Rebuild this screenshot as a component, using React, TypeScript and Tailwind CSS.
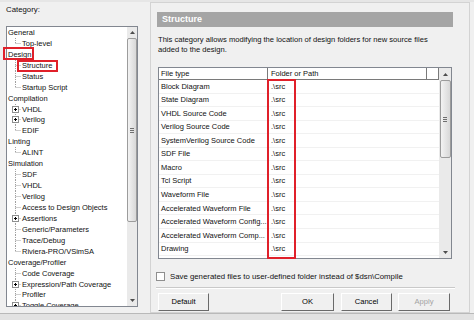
import React from "react";

type Node = { t: string; l: 0 | 1; last?: boolean; plus?: boolean };

const TREE: Node[] = [
  { t: "General", l: 0 },
  { t: "Top-level", l: 1, last: true },
  { t: "Design", l: 0 },
  { t: "Structure", l: 1 },
  { t: "Status", l: 1 },
  { t: "Startup Script", l: 1, last: true },
  { t: "Compilation", l: 0 },
  { t: "VHDL", l: 1, plus: true },
  { t: "Verilog", l: 1, plus: true },
  { t: "EDIF", l: 1, last: true },
  { t: "Linting", l: 0 },
  { t: "ALINT", l: 1, last: true },
  { t: "Simulation", l: 0 },
  { t: "SDF", l: 1 },
  { t: "VHDL", l: 1 },
  { t: "Verilog", l: 1 },
  { t: "Access to Design Objects", l: 1 },
  { t: "Assertions", l: 1, plus: true },
  { t: "Generic/Parameters", l: 1 },
  { t: "Trace/Debug", l: 1 },
  { t: "Riviera-PRO/VSimSA", l: 1, last: true },
  { t: "Coverage/Profiler", l: 0 },
  { t: "Code Coverage", l: 1 },
  { t: "Expression/Path Coverage", l: 1, plus: true },
  { t: "Profiler", l: 1 },
  { t: "Toggle Coverage", l: 1, plus: true },
];

const FILE_TYPES = [
  "Block Diagram",
  "State Diagram",
  "VHDL Source Code",
  "Verilog Source Code",
  "SystemVerilog Source Code",
  "SDF File",
  "Macro",
  "Tcl Script",
  "Waveform File",
  "Accelerated Waveform File",
  "Accelerated Waveform Config...",
  "Accelerated Waveform Comp...",
  "Drawing",
];

function Connector({ last, plus }: { last?: boolean; plus?: boolean }) {
  return (
    <svg width="15" height="11" viewBox="0 0 15 11" className="shrink-0">
      <line x1="8.5" y1="0" x2="8.5" y2={last ? 5.5 : 11} stroke="#a0a0a0" strokeDasharray="1 1" />
      <line x1="8.5" y1="5.5" x2="13.5" y2="5.5" stroke="#a0a0a0" strokeDasharray="1 1" />
      {plus && (
        <g>
          <rect x="5.5" y="2.5" width="6" height="6" fill="#fff" stroke="#8e8f8f" />
          <line x1="7" y1="5.5" x2="10" y2="5.5" stroke="#000" />
          <line x1="8.5" y1="4" x2="8.5" y2="7" stroke="#000" />
        </g>
      )}
    </svg>
  );
}

function Arrow({ up }: { up?: boolean }) {
  return (
    <svg width="5" height="3" viewBox="0 0 5 3">
      <path d={up ? "M0 3 L2.5 0 L5 3 Z" : "M0 0 L2.5 3 L5 0 Z"} fill="#4d4d4d" />
    </svg>
  );
}

function Grip() {
  return (
    <div className="flex flex-col gap-[1px]">
      <div className="w-[4px] h-px bg-[#6f6f6f]" />
      <div className="w-[4px] h-px bg-[#6f6f6f]" />
      <div className="w-[4px] h-px bg-[#6f6f6f]" />
    </div>
  );
}

function Btn({ label, w, disabled }: { label: string; w: string; disabled?: boolean }) {
  return (
    <div
      className={`${w} h-[18px] flex items-center justify-center bg-[#f0f0f0] border border-t-white border-l-white border-r-[#6a6a6a] border-b-[#6a6a6a] text-[7.6px] ${
        disabled ? "text-[#a3a3a3]" : "text-black"
      }`}
    >
      {label}
    </div>
  );
}

export default function App() {
  return (
    <div className="w-[474px] h-[320px] bg-[#f0f0f0] flex flex-col overflow-hidden font-['Liberation_Sans',Arial,sans-serif] text-[7.5px] text-[#111]">
      <div className="h-[313px] flex border-t-2 border-[#e6e6e6]">
        {/* Left: category tree */}
        <div className="relative w-[150px] shrink-0">
          <div className="pl-[6px] pt-[3px] leading-[10px] text-[7.8px]">Category:</div>
          <div className="ml-[6px] mt-[11px] w-[132px] h-[281px] border border-[#828790] bg-white flex">
            <div className="flex-1 overflow-hidden">
              {TREE.map((n, i) => (
                <div key={i} className="h-[10.95px] flex items-center whitespace-nowrap leading-[11px]">
                  {n.l === 1 ? <Connector last={n.last} plus={n.plus} /> : <div className="w-[1px]" />}
                  <span>{n.t}</span>
                </div>
              ))}
            </div>
            <div className="w-[10px] bg-[#eaeaea] flex flex-col items-center">
              <div className="h-[11px] flex items-center justify-center">
                <Arrow up />
              </div>
              <div className="w-[10px] h-[184px] border border-[#9c9c9c] rounded-[2px] bg-gradient-to-r from-[#f3f3f3] to-[#d8d8d8] flex items-center justify-center">
                <Grip />
              </div>
              <div className="flex-1" />
              <div className="h-[11px] flex items-center justify-center">
                <Arrow />
              </div>
            </div>
          </div>
          {/* annotation boxes */}
          <div className="absolute left-[3px] top-[45px] w-[31px] h-[13px] border-2 border-[#e0202a]" />
          <div className="absolute left-[17px] top-[58px] w-[41px] h-[12px] border-2 border-[#e0202a]" />
        </div>

        {/* Right: settings panel */}
        <div className="w-[320px] h-[311px] border border-[#d3d3d3] flex flex-col">
          <div className="ml-[6px] mt-[9px] w-[296px] h-[15px] bg-[#a5a5a5] text-white font-bold text-[9px] leading-[15px] pl-[5px]">
            Structure
          </div>
          <div className="ml-[7px] mt-[8px] leading-[10px] whitespace-nowrap text-[7.6px]">
            This category allows modifying the location of design folders for new source files
            <br />
            added to the design.
          </div>
          <div className="relative ml-[7px] mt-[12px] w-[294px] h-[192px] border border-[#828790] bg-white flex">
            <div className="w-[280px] flex flex-col">
              <div className="h-[12px] flex border-b border-[#7a7a7a] leading-[12px]">
                <div className="w-[109px] pl-[2px] border-r border-[#7a7a7a]">File type</div>
                <div className="w-[159px] pl-[3px] border-r border-[#7a7a7a]">Folder or Path</div>
                <div className="flex-1 border-r border-[#7a7a7a]" />
              </div>
              {FILE_TYPES.map((f) => (
                <div key={f} className="h-[13.56px] flex items-center border-b border-[#f1f1f1] whitespace-nowrap">
                  <div className="w-[109px] pl-[2px] overflow-hidden">{f}</div>
                  <div className="pl-[3px]">.\src</div>
                </div>
              ))}
            </div>
            <div className="w-[12px] bg-[#eaeaea] flex flex-col items-center">
              <div className="h-[12px] flex items-center justify-center">
                <Arrow up />
              </div>
              <div className="w-[11px] h-[78px] border border-[#9c9c9c] rounded-[2px] bg-gradient-to-r from-[#f3f3f3] to-[#d8d8d8] flex items-center justify-center">
                <Grip />
              </div>
              <div className="flex-1" />
              <div className="h-[12px] flex items-center justify-center">
                <Arrow />
              </div>
            </div>
            <div className="absolute left-[108px] top-[11px] w-[29px] h-[180px] border-2 border-[#e0202a]" />
          </div>
          <div className="ml-[5px] mt-[13px] h-[9px] flex items-center">
            <div className="w-[9px] h-[9px] border border-[#8f8f8f] bg-white" />
            <span className="ml-[5px] text-[7.8px]">Save generated files to user-defined folder instead of $dsn\Compile</span>
          </div>
          <div className="ml-[5px] mt-[6px] w-[299px] border-t border-[#c9c9c9] border-b border-b-white" />
          <div className="mt-[4px] flex">
            <div className="ml-[7px]">
              <Btn label="Default" w="w-[51px]" />
            </div>
            <div className="ml-[72px]">
              <Btn label="OK" w="w-[53px]" />
            </div>
            <div className="ml-[7px]">
              <Btn label="Cancel" w="w-[51px]" />
            </div>
            <div className="ml-[6px]">
              <Btn label="Apply" w="w-[52px]" disabled />
            </div>
          </div>
        </div>
      </div>
      <div className="flex-1 border-t border-[#b9b9b9] bg-[#e2e2e2]" />
    </div>
  );
}
